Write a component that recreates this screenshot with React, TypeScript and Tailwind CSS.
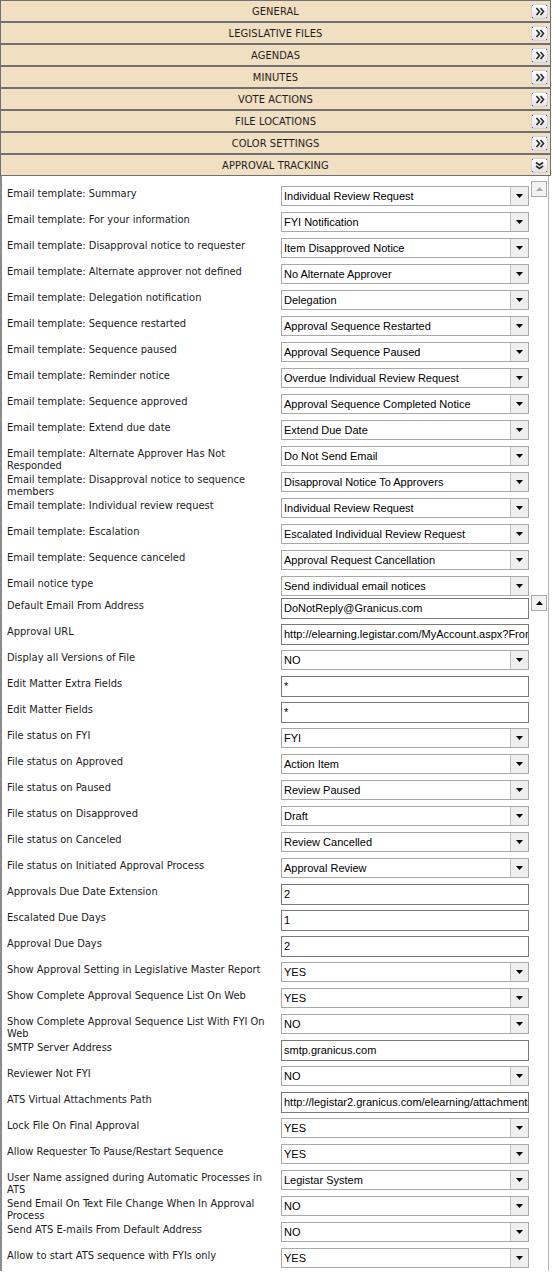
import React from "react";

type Row = {
  label: string;
  value: string;
  kind: "select" | "input";
};

const sections = [
  "GENERAL",
  "LEGISLATIVE FILES",
  "AGENDAS",
  "MINUTES",
  "VOTE ACTIONS",
  "FILE LOCATIONS",
  "COLOR SETTINGS",
  "APPROVAL TRACKING",
];

const templateRows: Row[] = [
  { label: "Email template: Summary", value: "Individual Review Request", kind: "select" },
  { label: "Email template: For your information", value: "FYI Notification", kind: "select" },
  { label: "Email template: Disapproval notice to requester", value: "Item Disapproved Notice", kind: "select" },
  { label: "Email template: Alternate approver not defined", value: "No Alternate Approver", kind: "select" },
  { label: "Email template: Delegation notification", value: "Delegation", kind: "select" },
  { label: "Email template: Sequence restarted", value: "Approval Sequence Restarted", kind: "select" },
  { label: "Email template: Sequence paused", value: "Approval Sequence Paused", kind: "select" },
  { label: "Email template: Reminder notice", value: "Overdue Individual Review Request", kind: "select" },
  { label: "Email template: Sequence approved", value: "Approval Sequence Completed Notice", kind: "select" },
  { label: "Email template: Extend due date", value: "Extend Due Date", kind: "select" },
  { label: "Email template: Alternate Approver Has Not Responded", value: "Do Not Send Email", kind: "select" },
  { label: "Email template: Disapproval notice to sequence members", value: "Disapproval Notice To Approvers", kind: "select" },
  { label: "Email template: Individual review request", value: "Individual Review Request", kind: "select" },
  { label: "Email template: Escalation", value: "Escalated Individual Review Request", kind: "select" },
  { label: "Email template: Sequence canceled", value: "Approval Request Cancellation", kind: "select" },
  { label: "Email notice type", value: "Send individual email notices", kind: "select" },
];

const settingRows: Row[] = [
  { label: "Default Email From Address", value: "DoNotReply@Granicus.com", kind: "input" },
  { label: "Approval URL", value: "http://elearning.legistar.com/MyAccount.aspx?From=Approval", kind: "input" },
  { label: "Display all Versions of File", value: "NO", kind: "select" },
  { label: "Edit Matter Extra Fields", value: "*", kind: "input" },
  { label: "Edit Matter Fields", value: "*", kind: "input" },
  { label: "File status on FYI", value: "FYI", kind: "select" },
  { label: "File status on Approved", value: "Action Item", kind: "select" },
  { label: "File status on Paused", value: "Review Paused", kind: "select" },
  { label: "File status on Disapproved", value: "Draft", kind: "select" },
  { label: "File status on Canceled", value: "Review Cancelled", kind: "select" },
  { label: "File status on Initiated Approval Process", value: "Approval Review", kind: "select" },
  { label: "Approvals Due Date Extension", value: "2", kind: "input" },
  { label: "Escalated Due Days", value: "1", kind: "input" },
  { label: "Approval Due Days", value: "2", kind: "input" },
  { label: "Show Approval Setting in Legislative Master Report", value: "YES", kind: "select" },
  { label: "Show Complete Approval Sequence List On Web", value: "YES", kind: "select" },
  { label: "Show Complete Approval Sequence List With FYI On Web", value: "NO", kind: "select" },
  { label: "SMTP Server Address", value: "smtp.granicus.com", kind: "input" },
  { label: "Reviewer Not FYI", value: "NO", kind: "select" },
  { label: "ATS Virtual Attachments Path", value: "http://legistar2.granicus.com/elearning/attachments/", kind: "input" },
  { label: "Lock File On Final Approval", value: "YES", kind: "select" },
  { label: "Allow Requester To Pause/Restart Sequence", value: "YES", kind: "select" },
  { label: "User Name assigned during Automatic Processes in ATS", value: "Legistar System", kind: "select" },
  { label: "Send Email On Text File Change When In Approval Process", value: "NO", kind: "select" },
  { label: "Send ATS E-mails From Default Address", value: "NO", kind: "select" },
  { label: "Allow to start ATS sequence with FYIs only", value: "YES", kind: "select" },
];

function ToggleButton({ open }: { open: boolean }) {
  return (
    <div className="relative w-[17px] h-[15px] rounded-[2px] border border-[#d2d2d8] bg-gradient-to-b from-white to-[#e2e2e2] flex items-center justify-center">
      {/* blue corner dots */}
      <span className="absolute left-0 top-0 w-px h-px bg-[#3d57e0]" />
      <span className="absolute right-0 top-0 w-px h-px bg-[#3d57e0]" />
      <span className="absolute left-0 bottom-0 w-px h-px bg-[#3d57e0]" />
      <span className="absolute right-0 bottom-0 w-px h-px bg-[#3d57e0]" />
      {open ? (
        <svg width="9" height="9" viewBox="0 0 9 9" fill="none" stroke="#2b2b2b" strokeWidth="1.6">
          <path d="M1 1.5 L4.5 4 L8 1.5" />
          <path d="M1 5 L4.5 7.5 L8 5" />
        </svg>
      ) : (
        <svg width="10" height="9" viewBox="0 0 10 9" fill="none" stroke="#2b2b2b" strokeWidth="1.6">
          <path d="M1.5 1 L4.5 4.5 L1.5 8" />
          <path d="M5.5 1 L8.5 4.5 L5.5 8" />
        </svg>
      )}
    </div>
  );
}

function SectionHeader({ title, open }: { title: string; open: boolean }) {
  return (
    <div className="relative h-[22px] bg-[#f0dfc1] border border-[#707070] flex items-center justify-center pt-[2px]">
      <span className="text-[11px] leading-[12px] text-[#1e1e1e] tracking-[0.1px]">{title}</span>
      <div className="absolute right-[2px] top-[3px]">
        <ToggleButton open={open} />
      </div>
    </div>
  );
}

function SelectBox({ value }: { value: string }) {
  return (
    <div className="w-[248px] h-[20px] border border-[#a9a9a9] bg-white flex items-stretch">
      <div className="flex-1 pl-[2px] flex items-center overflow-hidden whitespace-nowrap text-[11px] text-black font-['Liberation_Sans',Arial,sans-serif]">
        {value}
      </div>
      <div className="w-[18px] border-l border-[#c2c2c2] bg-[#efefef] flex items-center justify-center">
        <svg width="7" height="4" viewBox="0 0 7 4">
          <path d="M0 0 H7 L3.5 4 Z" fill="#000" />
        </svg>
      </div>
    </div>
  );
}

function TextBox({ value }: { value: string }) {
  return (
    <div className="w-[248px] h-[21px] border border-[#7a7a7a] bg-white pl-[2px] flex items-center overflow-hidden whitespace-nowrap text-[11px] text-black font-['Liberation_Sans',Arial,sans-serif]">
      {value}
    </div>
  );
}

function ScrollUp({ dim }: { dim: boolean }) {
  return (
    <div className="w-[16px] h-[16px] border border-[#acacac] bg-[#f3f3f3] flex items-center justify-center">
      <svg width="7" height="4" viewBox="0 0 7 4">
        <path d="M0 4 H7 L3.5 0 Z" fill={dim ? "#a9a9a9" : "#000"} />
      </svg>
    </div>
  );
}

function SettingRow({ row, short }: { row: Row; short?: boolean }) {
  return (
    <div className={short ? "flex h-[22px]" : "flex h-[26px]"}>
      <div className="w-[279px] pl-[5px] pr-[4px] pt-[5px] text-[11px] leading-[12px] text-[#1c1c1c]">
        {row.label}
      </div>
      <div className="pt-[3px]">
        {row.kind === "select" ? <SelectBox value={row.value} /> : <TextBox value={row.value} />}
      </div>
    </div>
  );
}

export default function App() {
  return (
    <div className="w-[551px] bg-white font-['DejaVu_Sans_Condensed','DejaVu_Sans',sans-serif]">
      {/* Section headers */}
      <div className="flex flex-col">
        {sections.map((s, i) => (
          <SectionHeader key={s} title={s} open={i === sections.length - 1} />
        ))}
      </div>

      {/* Approval tracking settings */}
      <div className="w-[549px] border-l-2 border-r border-l-[#8c8c8c] border-r-[#b4b4b4] pt-[5px]">
        <div className="flex">
          <div className="w-[527px] pt-[2px]">
            {templateRows.map((r, i) => (
              <SettingRow key={r.label} row={r} short={i === templateRows.length - 1} />
            ))}
          </div>
          <div className="ml-[2px]">
            <ScrollUp dim />
          </div>
        </div>
        <div className="flex">
          <div className="w-[527px]">
            {settingRows.map((r) => (
              <SettingRow key={r.label} row={r} />
            ))}
          </div>
          <div className="ml-[2px]">
            <ScrollUp dim={false} />
          </div>
        </div>
      </div>
    </div>
  );
}
